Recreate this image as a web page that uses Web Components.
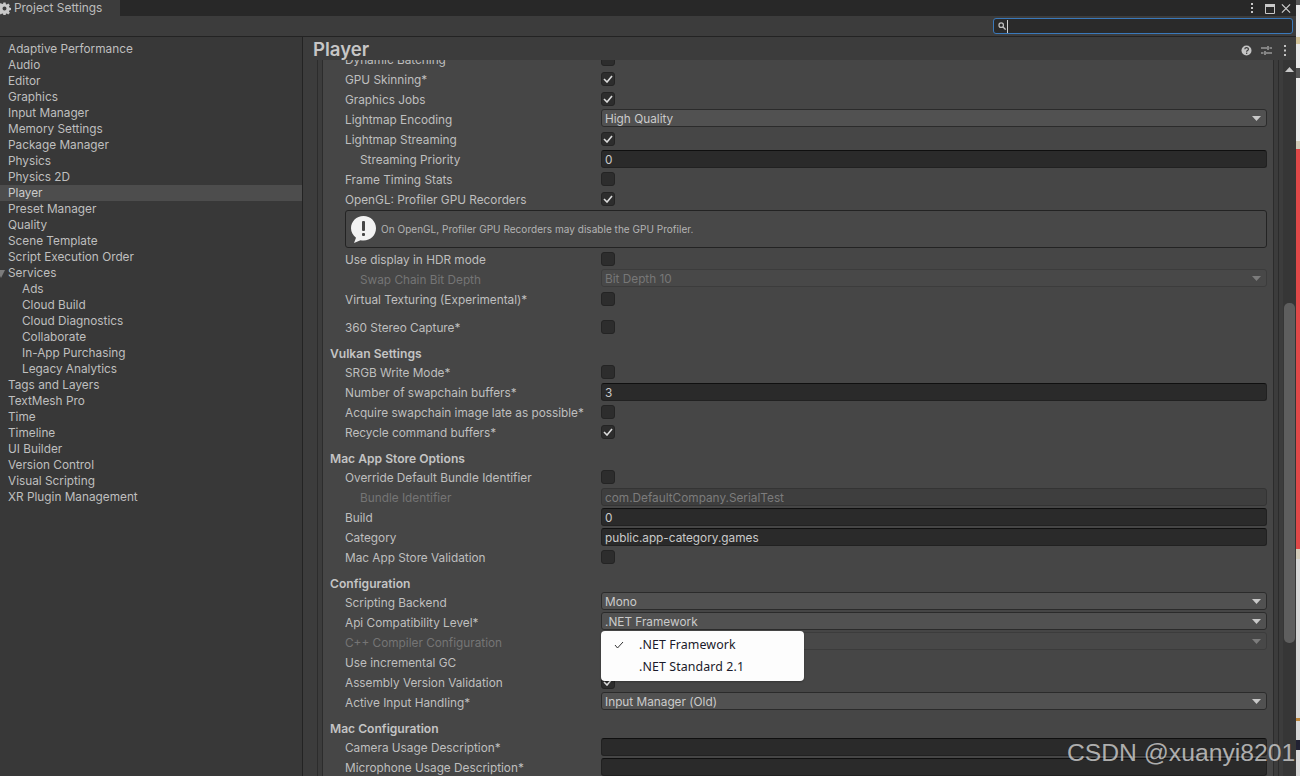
<!DOCTYPE html>
<html lang="en"><head><meta charset="utf-8"><title>Project Settings</title>
<style>
html,body{margin:0;padding:0;width:1300px;height:776px;overflow:hidden;background:#d8d8d8}
body{font-family:Inter,"Liberation Sans",sans-serif;font-size:12px;color:#bfbfbf;position:relative}
</style></head><body>
<project-settings>
  <side-item>Adaptive Performance</side-item><side-item>Audio</side-item><side-item>Editor</side-item><side-item>Graphics</side-item><side-item>Input Manager</side-item><side-item>Memory Settings</side-item><side-item>Package Manager</side-item><side-item>Physics</side-item><side-item>Physics 2D</side-item><side-item selected>Player</side-item><side-item>Preset Manager</side-item><side-item>Quality</side-item><side-item>Scene Template</side-item><side-item>Script Execution Order</side-item><side-item expander>Services</side-item><side-item child>Ads</side-item><side-item child>Cloud Build</side-item><side-item child>Cloud Diagnostics</side-item><side-item child>Collaborate</side-item><side-item child>In-App Purchasing</side-item><side-item child>Legacy Analytics</side-item><side-item>Tags and Layers</side-item><side-item>TextMesh Pro</side-item><side-item>Time</side-item><side-item>Timeline</side-item><side-item>UI Builder</side-item><side-item>Version Control</side-item><side-item>Visual Scripting</side-item><side-item>XR Plugin Management</side-item>
  <div slot="body">
    <field-row kind="check">Dynamic Batching</field-row>
    <field-row kind="check" checked>GPU Skinning*</field-row>
    <field-row kind="check" checked>Graphics Jobs</field-row>
    <field-row kind="select" value="High Quality">Lightmap Encoding</field-row>
    <field-row kind="check" checked>Lightmap Streaming</field-row>
    <field-row kind="input" value="0" indent>Streaming Priority</field-row>
    <field-row kind="check">Frame Timing Stats</field-row>
    <field-row kind="check" checked>OpenGL: Profiler GPU Recorders</field-row>
    <help-box>On OpenGL, Profiler GPU Recorders may disable the GPU Profiler.</help-box>
    <field-row kind="check">Use display in HDR mode</field-row>
    <field-row kind="select" value="Bit Depth 10" indent disabled>Swap Chain Bit Depth</field-row>
    <field-row kind="check">Virtual Texturing (Experimental)*</field-row>
    <field-row kind="check" style="margin-top:8px">360 Stereo Capture*</field-row>
    <section-head>Vulkan Settings</section-head>
    <field-row kind="check">SRGB Write Mode*</field-row>
    <field-row kind="input" value="3">Number of swapchain buffers*</field-row>
    <field-row kind="check">Acquire swapchain image late as possible*</field-row>
    <field-row kind="check" checked>Recycle command buffers*</field-row>
    <section-head>Mac App Store Options</section-head>
    <field-row kind="check">Override Default Bundle Identifier</field-row>
    <field-row kind="input" value="com.DefaultCompany.SerialTest" indent disabled>Bundle Identifier</field-row>
    <field-row kind="input" value="0">Build</field-row>
    <field-row kind="input" value="public.app-category.games">Category</field-row>
    <field-row kind="check">Mac App Store Validation</field-row>
    <section-head>Configuration</section-head>
    <field-row kind="select" value="Mono">Scripting Backend</field-row>
    <field-row kind="select" value=".NET Framework">Api Compatibility Level*</field-row>
    <field-row kind="select" value="" disabled>C++ Compiler Configuration</field-row>
    <field-row kind="check" checked>Use incremental GC</field-row>
    <field-row kind="check" checked>Assembly Version Validation</field-row>
    <field-row kind="select" value="Input Manager (Old)">Active Input Handling*</field-row>
    <section-head>Mac Configuration</section-head>
    <field-row kind="input" value="">Camera Usage Description*</field-row>
    <field-row kind="input" value="">Microphone Usage Description*</field-row>
  </div>
</project-settings>
<popup-menu></popup-menu>
<water-mark>CSDN @xuanyi8201</water-mark>
<side-strip></side-strip>

<script>
function def(name, css, html){
  customElements.define(name, class extends HTMLElement{
    connectedCallback(){
      if(this.shadowRoot) return;
      const r=this.attachShadow({mode:'open'});
      r.innerHTML='<style>'+css+'</style>'+(typeof html==='function'?html(this):html);
    }
  });
}
const esc=s=>(s||'').replace(/&/g,'&amp;').replace(/"/g,'&quot;').replace(/</g,'&lt;');

def('project-settings',`
:host{display:flex;flex-direction:column;width:1296px;height:776px;background:#3c3c3c;overflow:hidden}
.tabs{display:flex;height:16px;background:#282828;flex:none;align-items:stretch}
.tab{width:120px;background:#3c3c3c;display:flex;align-items:center;gap:3px;font-size:11.9px;color:#bdbdbd;line-height:16px}
.tab svg{flex:none;margin-left:-2px}
.winbtns{margin-left:auto;display:flex;align-items:center;height:16px;padding-right:5px}
.tool{height:20px;flex:none;background:#3c3c3c;border-bottom:1px solid #232323;display:flex;justify-content:flex-end;align-items:center;padding-right:3px}
.search{width:300px;height:16px;box-sizing:border-box;border:1px solid #3a79bb;border-radius:3px;background:#2a2a2a;display:flex;align-items:center;padding-left:3px}
.caret{width:1px;height:13px;background:#d2d2d2;margin-left:1px}
.main{flex:1;display:flex;min-height:0}
.side{width:302px;flex:none;background:#383838;border-right:1px solid #232323;padding-top:4px;overflow:hidden;display:flex;flex-direction:column}
.right{flex:1;display:flex;flex-direction:column;min-width:0}
.head{height:23px;flex:none;background:#3c3c3c;display:flex;align-items:center;padding:0 8px 0 10px}
.head h1{margin:0;padding-top:2px;font-size:18.6px;line-height:23px;font-weight:600;color:#c6c6c6}
.tools{margin-left:auto;display:flex;align-items:center;gap:7px;padding-top:4px}
.under{flex:1;display:flex;min-height:0}
.gut{width:14px;flex:none;background:#3c3c3c;border-right:1px solid #2c2c2c}
.gut2{width:4px;flex:none;background:#3c3c3c;border-right:1px solid #2c2c2c}
.content{flex:1;background:#464646;overflow:hidden;min-width:0}
.inner{margin-top:-11px;padding:0 6px 0 7px}
.gut3{width:4px;flex:none;background:#3c3c3c;border-left:1px solid #2c2c2c}
.gut4{width:4px;flex:none;background:#3c3c3c;border-left:1px solid #2c2c2c}
.bar{width:13px;flex:none;background:#363636;display:flex;flex-direction:column;align-items:center;padding-top:7px;box-sizing:border-box}
.thumb{width:11px;height:340px;border-radius:5px;background:#5e5e5e;margin-top:231px}
`,`
<div class="tabs"><div class="tab"><svg width="13" height="13" viewBox="0 0 13 13"><path fill="#c8c8c8" fill-rule="evenodd" d="M5.400.5h2.200l.3 1.700 1 .4 1.400-1 1.600 1.600-1 1.400.4 1 1.700.3v2.200l-1.700.3-.4 1 1 1.400-1.600 1.600-1.400-1-1 .4-.3 1.700H5.400l-.3-1.700-1-.4-1.400 1-1.600-1.600 1-1.400-.4-1-1.700-.3V5.400l1.700-.3.4-1-1-1.400 1.600-1.600 1.400 1 1-.4zM6.500 4.500a2 2 0 100 4 2 2 0 000-4z"/></svg><span>Project Settings</span></div>
<div class="winbtns">
<svg width="10" height="12" viewBox="0 0 10 12"><g fill="#c8c8c8"><rect x="4" y="1" width="2" height="2"/><rect x="4" y="5" width="2" height="2"/><rect x="4" y="9" width="2" height="2"/></g></svg>
<svg width="10" height="11" viewBox="0 0 10 11" style="margin-left:8px"><path fill="none" stroke="#c8c8c8" d="M.5 1.500h9v9h-9z"/><rect x="0" y="1" width="10" height="3" fill="#c8c8c8"/></svg>
<svg width="10" height="11" viewBox="0 0 11 11" style="margin-left:6px"><path stroke="#d0d0d0" stroke-width="1.300" d="M1 1l9 9M10 1l-9 9"/></svg>
</div></div>
<div class="tool"><div class="search"><svg width="8" height="8" viewBox="0 0 10 10" style="margin-left:1px"><circle cx="4" cy="4" r="2.800" fill="none" stroke="#c0c0c0" stroke-width="1.500"/><path d="M6 6L9.500 9.500" stroke="#c0c0c0" stroke-width="1.700"/></svg><div class="caret"></div></div></div>
<div class="main">
 <div class="side"><slot></slot></div>
 <div class="right">
  <div class="head"><h1>Player</h1><div class="tools">
   <svg width="11" height="11" viewBox="0 0 11 11"><circle cx="5.500" cy="5.500" r="5" fill="#c4c4c4"/><path d="M3.800 4.300c0-2.200 3.600-2.200 3.600-.1 0 1.300-1.800 1.300-1.800 2.500" fill="none" stroke="#3c3c3c" stroke-width="1.200"/><rect x="5" y="7.600" width="1.300" height="1.300" fill="#3c3c3c"/></svg>
   <svg width="11" height="11" viewBox="0 0 11 11" style="margin-left:2px"><path stroke="#c4c4c4" stroke-width="1.100" d="M0 3h6M8.500 3H11M0 8h2.500M5 8h6M7 1v4M4 6v4" fill="none"/></svg>
   <svg width="6" height="11" viewBox="0 0 6 11" style="margin-left:3px"><g fill="#c4c4c4"><rect x="2" y="0" width="2" height="2"/><rect x="2" y="4.500" width="2" height="2"/><rect x="2" y="9" width="2" height="2"/></g></svg>
  </div></div>
  <div class="under">
   <div class="gut"></div><div class="gut2"></div>
   <div class="content"><div class="inner"><slot name="body"></slot></div></div>
   <div class="gut3"></div><div class="gut4"></div>
   <div class="bar"><svg width="9" height="5" viewBox="0 0 9 5"><path d="M4.500 0L9 5H0z" fill="#c8c8c8"/></svg><div class="thumb"></div></div>
  </div>
 </div>
</div>`);

def('side-item',`
:host{display:block;height:16px;line-height:16px;padding-left:8px;color:#bfbfbf;font-size:11.8px;white-space:nowrap;position:relative;flex:none}
:host([selected]){background:#4d4d4d;color:#cbcbcb}
:host([child]){padding-left:22px}
svg{position:absolute;left:0;top:5px}
`,e=>(e.hasAttribute('expander')?'<svg width="5" height="8" viewBox="0 0 5 8"><path d="M-3 0h8L1 8z" fill="#7c7c7c"/></svg>':'')+'<slot></slot>');

def('section-head',`
:host{display:block;height:20px;line-height:20px;font-weight:600;font-size:12.1px;color:#c4c4c4;margin-top:7px;margin-bottom:-2px}
`,'<slot></slot>');

def('field-row',`
:host{display:flex;height:20px;align-items:center;color:#bfbfbf;font-size:11.8px;white-space:nowrap;margin-left:15px}
:host([indent]) .l{padding-left:15px}
:host([disabled]) .l{color:#757575}
.l{width:256px;box-sizing:border-box;flex:none;padding-top:2px}
.f{flex:1;min-width:0;display:flex;align-items:center}
.cb{width:14px;height:14px;border-radius:3px;background:#2d2d2d;border:1px solid #242424;box-sizing:border-box;display:flex;align-items:center;justify-content:center;margin-top:-1px}
.sel{width:100%;height:18px;box-sizing:border-box;border:1px solid #2b2b2b;border-radius:3px;background:#515151;display:flex;align-items:center;padding:0 5px 0 3px;color:#cbcbcb;margin-top:-2px}
.sel span{padding-top:2px}
.sel svg{margin-left:auto;flex:none}
.inp{width:100%;height:18px;box-sizing:border-box;border:1px solid #212121;border-top-color:#0f0f0f;border-radius:3px;background:#2a2a2a;display:flex;align-items:center;padding:2px 3px 0;color:#cbcbcb;margin-top:-1px}
.sel.dis{background:#484848;border-color:#3c3c3c;color:#777}
.inp.dis{background:#3e3e3e;border-color:#343434;color:#7c7c7c}
`,e=>{
 const k=e.getAttribute('kind'),v=esc(e.getAttribute('value')),d=e.hasAttribute('disabled');
 let f='';
 if(k==='check') f='<div class="cb">'+(e.hasAttribute('checked')?'<svg width="10" height="8" viewBox="0 0 10 8"><path d="M1 4l3 3 5-6" fill="none" stroke="#dcdcdc" stroke-width="1.600"/></svg>':'')+'</div>';
 if(k==='select') f='<div class="sel'+(d?' dis':'')+'"><span>'+v+'</span><svg width="9" height="5" viewBox="0 0 9 5"><path d="M0 0h9L4.500 5z" fill="'+(d?'#7c7c7c':'#c8c8c8')+'"/></svg></div>';
 if(k==='input') f='<div class="inp'+(d?' dis':'')+'"><span>'+v+'</span></div>';
 return '<div class="l"><slot></slot></div><div class="f">'+f+'</div>';
});

def('help-box',`
:host{display:flex;align-items:center;height:38px;box-sizing:border-box;margin:1px 0 1px 15px;border:1px solid #232323;border-radius:3px;background:#484848;font-size:10px;color:#b4b4b4;white-space:nowrap;padding-left:4px;gap:4px;letter-spacing:.03px}
svg{flex:none;margin-top:1px}
`,`<svg width="27" height="30" viewBox="0 0 27 30"><path fill="#f2f2f2" d="M13.500 1C20.600 1 26 6.500 26 13.300c0 6.800-5.400 12.300-12.500 12.300-1 0-2-.1-3-.4L4 28l2-5.200C3 20.500 1 17.200 1 13.300 1 6.500 6.400 1 13.500 1z"/><rect x="12" y="6" width="3" height="10" rx="1" fill="#464646"/><rect x="12" y="18" width="3" height="3" rx="1" fill="#464646"/></svg><slot></slot>`);

def('popup-menu',`
:host{position:absolute;left:601px;top:631px;width:203px;height:50px;box-sizing:border-box;padding-bottom:2px;background:#fdfdfd;border-radius:4px;font-family:"Noto Sans","Liberation Sans",sans-serif;font-size:12.4px;color:#1a1a2a;display:flex;flex-direction:column;justify-content:center;box-shadow:0 1px 2px rgba(0,0,0,.25)}
.i{height:22px;display:flex;align-items:center;padding-left:38px;position:relative;letter-spacing:.1px}
svg{position:absolute;left:13px;top:8px}
`,`<div class="i"><svg width="10" height="8" viewBox="0 0 10 8"><path d="M1 4l2.500 3L9 1" fill="none" stroke="#333" stroke-width="1"/></svg>.NET Framework</div><div class="i">.NET Standard 2.1</div>`);

def('water-mark',`
:host{position:absolute;left:1067px;top:738px;font-family:"Liberation Sans",Arial,sans-serif;font-size:24.7px;line-height:30px;color:rgba(205,205,205,.82);white-space:nowrap}
`,'<slot></slot>');

def('side-strip',`
:host{position:absolute;left:1296px;top:0;width:4px;height:776px;background:linear-gradient(#5a5a5a 0 5px,#ececec 5px 37px,#d8c9a0 37px 44px,#ececec 44px 68px,#555 68px 78px,#ececec 78px 141px,#d5cdbb 141px 149px,#e04848 149px 549px,#d5cdbb 549px 559px,#d9d9d9 559px 718px,#c08a40 718px 721px,#d9d9d9 721px 740px,#223 740px 750px,#d9d9d9 750px)}
`,'');
</script>
</body></html>
